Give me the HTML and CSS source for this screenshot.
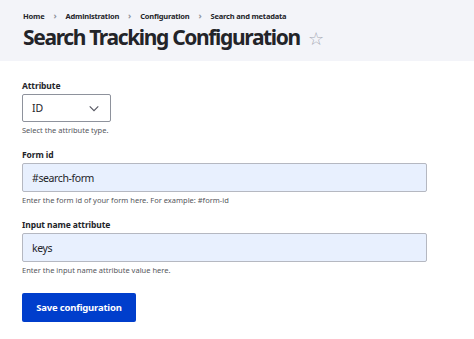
FILE: index.html
```html
<!DOCTYPE html>
<html lang="en">
<head>
    <meta charset="UTF-8">
    <meta name="viewport" content="width=device-width, initial-scale=1.0">
    <title>Search Tracking Configuration</title>
    <link rel="stylesheet" href="styles.css">
</head>
<body>
    <div class="page-header">
        <nav class="breadcrumb">
            <a href="#">Home</a>
            <span class="sep">&rsaquo;</span>
            <a href="#">Administration</a>
            <span class="sep">&rsaquo;</span>
            <a href="#">Configuration</a>
            <span class="sep">&rsaquo;</span>
            <a href="#">Search and metadata</a>
        </nav>
        <h1 class="title">Search Tracking Configuration <span class="star">&#9734;</span></h1>
    </div>

    <form class="config-form">
        <div class="form-item">
            <label class="label">Attribute</label>
            <div class="select">
                <span>ID</span>
                <svg class="chevron" viewBox="0 0 14 9" fill="none" stroke="#545560" stroke-width="1.5">
                    <path d="M1 1.5l6 6 6-6"></path>
                </svg>
            </div>
            <div class="description">Select the attribute type.</div>
        </div>

        <div class="form-item">
            <label class="label">Form id</label>
            <input class="text-input" type="text" value="#search-form">
            <div class="description">Enter the form id of your form here. For example: #form-id</div>
        </div>

        <div class="form-item">
            <label class="label">Input name attribute</label>
            <input class="text-input" type="text" value="keys">
            <div class="description">Enter the input name attribute value here.</div>
        </div>

        <button class="button" type="button">Save configuration</button>
    </form>
</body>
</html>
```

FILE: styles.css
```css
body {
    margin: 0;
    background-color: #fff;
    color: #232429;
    font-family: "Noto Sans", "DejaVu Sans", sans-serif;
}
.page-header {
    background-color: #f3f4f9;
    padding: 9px 23px 12px;
    height: 40px;
}
.breadcrumb {
    display: flex;
    align-items: center;
    gap: 9px;
    font-size: 7.5px;
    font-weight: bold;
    line-height: 14px;
    letter-spacing: -0.2px;
}
.breadcrumb a {
    color: #232429;
    text-decoration: none;
}
.breadcrumb .sep {
    color: #8e929c;
    font-size: 9px;
    line-height: 14px;
}
.title {
    margin: 0;
    font-size: 21px;
    font-weight: bold;
    line-height: 28px;
    letter-spacing: -1.35px;
}
.star {
    font-weight: normal;
    font-size: 18px;
    color: #a5a8b3;
    margin-left: 4px;
    letter-spacing: 0;
}
.config-form {
    padding: 18px 22px;
}
.form-item {
    margin-bottom: 12px;
}
.label {
    display: block;
    font-size: 8.5px;
    font-weight: bold;
    line-height: 14px;
    margin-bottom: 1px;
    letter-spacing: -0.1px;
}
.select {
    display: flex;
    align-items: center;
    justify-content: space-between;
    box-sizing: border-box;
    width: 89px;
    height: 28px;
    padding: 0 9px;
    border: 1px solid #8e929c;
    border-radius: 2px;
    font-size: 10.5px;
}
.chevron {
    width: 10px;
    height: 7px;
    margin-right: 2px;
}
.text-input {
    display: block;
    box-sizing: border-box;
    width: 405px;
    height: 29px;
    padding: 0 9px;
    border: 1px solid #b5b8c1;
    border-radius: 2px;
    background-color: #e8f0fe;
    color: #232429;
    font-family: inherit;
    font-size: 10.5px;
    letter-spacing: -0.4px;
}
.description {
    margin-top: 3px;
    font-size: 7.5px;
    line-height: 11px;
    color: #55565b;
}
.button {
    display: block;
    margin-top: 17px;
    box-sizing: border-box;
    width: 114px;
    height: 29px;
    border: none;
    border-radius: 2px;
    background-color: #003ecc;
    color: #fff;
    font-family: inherit;
    font-size: 9.5px;
    font-weight: bold;
    letter-spacing: -0.2px;
}
```
